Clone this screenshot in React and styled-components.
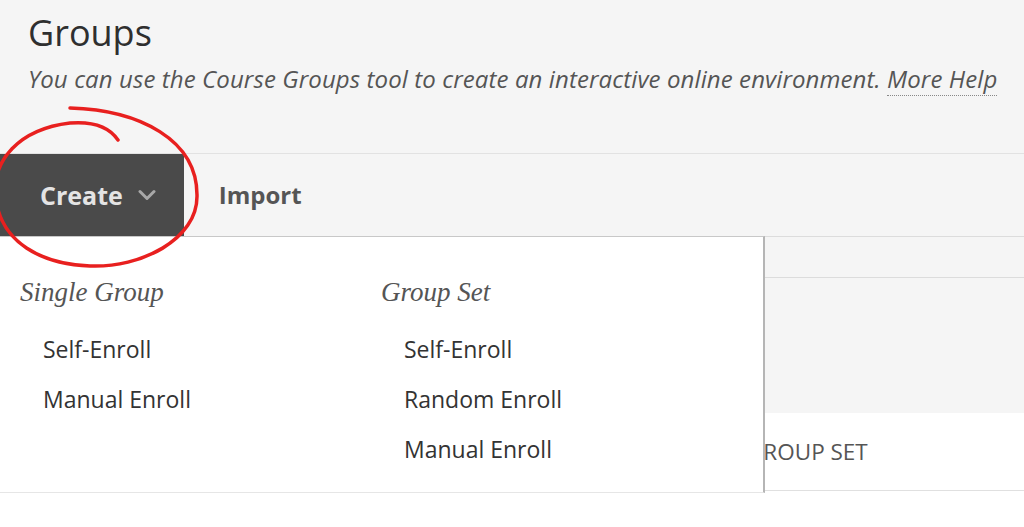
import React from 'react';
import styled, { createGlobalStyle } from 'styled-components';

const GlobalStyle = createGlobalStyle`
  html, body {
    margin: 0;
    padding: 0;
    background: #ffffff;
  }
  body {
    font-family: "Open Sans", "Liberation Sans", sans-serif;
    overflow: hidden;
  }
`;

const Page = styled.div`
  position: relative;
  width: 1024px;
  height: 527px;
  overflow: hidden;
  background: #ffffff;
`;

const Header = styled.header`
  background: #f5f5f5;
  padding: 11px 28px 57px 28px;
`;

const Title = styled.h1`
  margin: 0 0 8px 0;
  font-size: 36px;
  line-height: 1.2;
  font-weight: 400;
  color: #2f2f2f;
`;

const Subtitle = styled.p`
  margin: 0;
  font-size: 24px;
  line-height: 1.4;
  font-style: italic;
  color: #555555;
  white-space: nowrap;
  letter-spacing: 0.1px;
`;

const HelpLink = styled.a`
  color: #555555;
  text-decoration: none;
  border-bottom: 1px dotted #888888;
`;

const Toolbar = styled.nav`
  display: flex;
  align-items: stretch;
  height: 82px;
  background: #f5f5f5;
  border-top: 1px solid #e2e2e2;
  border-bottom: 1px solid #dcdcdc;
`;

const ToolButton = styled.button`
  display: flex;
  align-items: center;
  gap: 15px;
  border: none;
  margin: 0;
  font-family: inherit;
  font-size: ${(p) => (p.dark ? 25 : 24)}px;
  font-weight: 700;
  padding: ${(p) => (p.dark ? '0 28px 0 40px' : '0 0 0 35px')};
  background: ${(p) => (p.dark ? '#4a4a4a' : 'transparent')};
  color: ${(p) => (p.dark ? '#e4e4e4' : '#555555')};
`;

const Band = styled.div`
  height: 40px;
  background: #f5f5f5;
  border-bottom: 1px solid #dcdcdc;
`;

const GrayArea = styled.div`
  height: 135px;
  background: #f5f5f5;
`;

const TableHead = styled.div`
  display: grid;
  grid-template-columns: 747px 1fr;
  align-items: center;
  height: 77px;
  border-bottom: 1px solid #e0e0e0;
  font-size: 22.5px;
  color: #555555;
  text-transform: uppercase;
`;

const HeadCell = styled.div`
  padding-left: ${(p) => p.pad || 0}px;
`;

const Menu = styled.div`
  position: absolute;
  left: 0;
  top: 236px;
  width: 765px;
  height: 257px;
  background: #ffffff;
  border-top: 1px solid #c8c8c8;
  border-right: 2px solid #b5b5b5;
  border-bottom: 1px solid #e6e6e6;
  display: grid;
  grid-template-columns: 361px 1fr;
  padding: 40px 0 0 20px;
  box-sizing: border-box;
`;

const MenuColumn = styled.div`
  display: flex;
  flex-direction: column;
`;

const MenuHeading = styled.h3`
  margin: 0 0 17px 0;
  font-family: "Liberation Serif", "DejaVu Serif", serif;
  font-style: italic;
  font-weight: 400;
  font-size: 27px;
  line-height: 30px;
  color: #555555;
`;

const MenuItem = styled.a`
  display: block;
  padding-left: 23px;
  font-size: 23px;
  line-height: 50px;
  color: #333333;
  text-decoration: none;
`;

const Annotation = styled.svg`
  position: absolute;
  left: 0;
  top: 0;
  width: 240px;
  height: 290px;
  pointer-events: none;
`;

function Chevron() {
  return (
    <svg width="18" height="12" viewBox="0 0 18 12">
      <path d="M2 2.5 L9 9.5 L16 2.5" fill="none" stroke="#a8a8a8" strokeWidth="3" strokeLinecap="round" strokeLinejoin="round" />
    </svg>
  );
}

export default function App() {
  return (
    <>
      <GlobalStyle />
      <Page>
        <Header>
          <Title>Groups</Title>
          <Subtitle>
            You can use the Course Groups tool to create an interactive online environment.{' '}
            <HelpLink href="#">More Help</HelpLink>
          </Subtitle>
        </Header>
        <Toolbar>
          <ToolButton dark>
            Create
            <Chevron />
          </ToolButton>
          <ToolButton>Import</ToolButton>
        </Toolbar>
        <Band />
        <GrayArea />
        <TableHead>
          <HeadCell pad={28}>Group Name</HeadCell>
          <HeadCell>Group Set</HeadCell>
        </TableHead>

        <Menu>
          <MenuColumn>
            <MenuHeading>Single Group</MenuHeading>
            <MenuItem href="#">Self-Enroll</MenuItem>
            <MenuItem href="#">Manual Enroll</MenuItem>
          </MenuColumn>
          <MenuColumn>
            <MenuHeading>Group Set</MenuHeading>
            <MenuItem href="#">Self-Enroll</MenuItem>
            <MenuItem href="#">Random Enroll</MenuItem>
            <MenuItem href="#">Manual Enroll</MenuItem>
          </MenuColumn>
        </Menu>

        <Annotation viewBox="0 0 240 290">
          <path
            d="M70 108 C140 110 197 140 197 195 C198 240 140 268 90 266 C40 264 2 242 -4 200 C-10 160 20 129 70 123 C95 121 110 128 118 140"
            fill="none"
            stroke="#e8201f"
            strokeWidth="3.5"
            strokeLinecap="round"
          />
        </Annotation>
      </Page>
    </>
  );
}
